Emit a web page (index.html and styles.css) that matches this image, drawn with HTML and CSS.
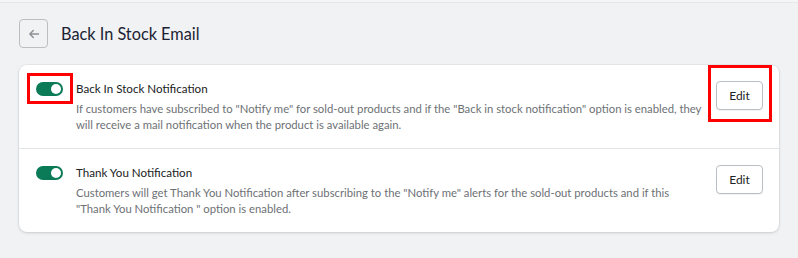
FILE: index.html
```html
<!DOCTYPE html>
<html lang="en">
<head>
<meta charset="utf-8">
<title>Back In Stock Email</title>
<link rel="stylesheet" href="styles.css">
</head>
<body>
<div class="topline"></div>
<main class="page">
  <header class="page-header">
    <button class="back-btn" aria-label="Back">
      <svg width="12" height="12" viewBox="0 0 12 12" fill="none" stroke="#8c9196" stroke-width="1.4" stroke-linecap="round" stroke-linejoin="round"><path d="M10.5 6H1.8M5.3 2.5L1.8 6l3.5 3.5"/></svg>
    </button>
    <h1 class="page-title">Back In Stock Email</h1>
  </header>

  <section class="card">
    <div class="row">
      <div class="toggle-wrap">
        <span class="toggle"><span class="knob"></span></span>
        <span class="mark mark-toggle"></span>
      </div>
      <div class="text">
        <div class="row-title">Back In Stock Notification</div>
        <p class="row-desc">If customers have subscribed to "Notify me" for sold-out products and if the "Back in stock notification" option is enabled, they<br>will receive a mail notification when the product is available again.</p>
      </div>
      <div class="btn-wrap">
        <button class="edit-btn">Edit</button>
        <span class="mark mark-edit"></span>
      </div>
    </div>
    <div class="row">
      <div class="toggle-wrap">
        <span class="toggle"><span class="knob"></span></span>
      </div>
      <div class="text">
        <div class="row-title">Thank You Notification</div>
        <p class="row-desc">Customers will get Thank You Notification after subscribing to the "Notify me" alerts for the sold-out products and if this<br>"Thank You Notification " option is enabled.</p>
      </div>
      <div class="btn-wrap">
        <button class="edit-btn">Edit</button>
      </div>
    </div>
  </section>
</main>
</body>
</html>
```

FILE: styles.css
```css
* { box-sizing: border-box; }
html, body {
  margin: 0;
  padding: 0;
  background: #f1f2f4;
  font-family: Lato, "Noto Sans", sans-serif;
}
.topline {
  height: 3px;
  background: #f5f5f6;
  border-bottom: 1px solid #e6e7e9;
}
.page {
  padding: 16px 19px 20px 19px;
}
.page-header {
  display: flex;
  align-items: center;
  gap: 13px;
  height: 29px;
}
.back-btn {
  width: 29px;
  height: 29px;
  padding: 0;
  margin: 0;
  border: 1px solid #babfc4;
  border-radius: 4px;
  background: transparent;
  display: flex;
  align-items: center;
  justify-content: center;
}
.page-title {
  margin: 0;
  font-size: 16.3px;
  font-weight: 400;
  color: #1c2233;
  line-height: 20px;
}
.card {
  margin-top: 17px;
  width: 760px;
  background: #fff;
  border-radius: 8px;
  box-shadow: 0 0 0 1px rgba(63,63,68,0.04), 0 1px 3px rgba(63,63,68,0.18);
}
.row {
  display: flex;
  align-items: flex-start;
  padding: 16px 16px 15px 17px;
}
.row + .row {
  border-top: 1px solid #e4e5e7;
  padding-top: 16px;
}
.toggle-wrap {
  position: relative;
  width: 40px;
  flex: none;
  padding-top: 1px;
}
.toggle {
  display: block;
  width: 27px;
  height: 14px;
  border-radius: 7px;
  background: #0b7a56;
  position: relative;
}
.knob {
  position: absolute;
  right: 2px;
  top: 2px;
  width: 10px;
  height: 10px;
  border-radius: 50%;
  background: #fff;
}
.text {
  flex: 1;
  min-width: 0;
}
.row-title {
  font-size: 11.6px;
  line-height: 15px;
  color: #202223;
}
.row-desc {
  margin: 5px 0 0 0;
  font-size: 11.3px;
  line-height: 16px;
  color: #6d7175;
  white-space: nowrap;
}
.btn-wrap {
  position: relative;
  flex: none;
  margin-left: 12px;
}
.edit-btn {
  width: 47px;
  height: 29px;
  padding: 0;
  margin: 0;
  border: 1px solid #babfc4;
  border-radius: 4px;
  background: #fff;
  font-family: inherit;
  font-size: 12px;
  color: #202223;
  box-shadow: 0 1px 0 rgba(0,0,0,0.05);
}
.mark {
  position: absolute;
  border: 3px solid #f00;
  pointer-events: none;
}
.mark-toggle {
  left: -9px;
  top: -8px;
  width: 46px;
  height: 31px;
}
.mark-edit {
  left: -8px;
  top: -16px;
  width: 64px;
  height: 57px;
}
```
